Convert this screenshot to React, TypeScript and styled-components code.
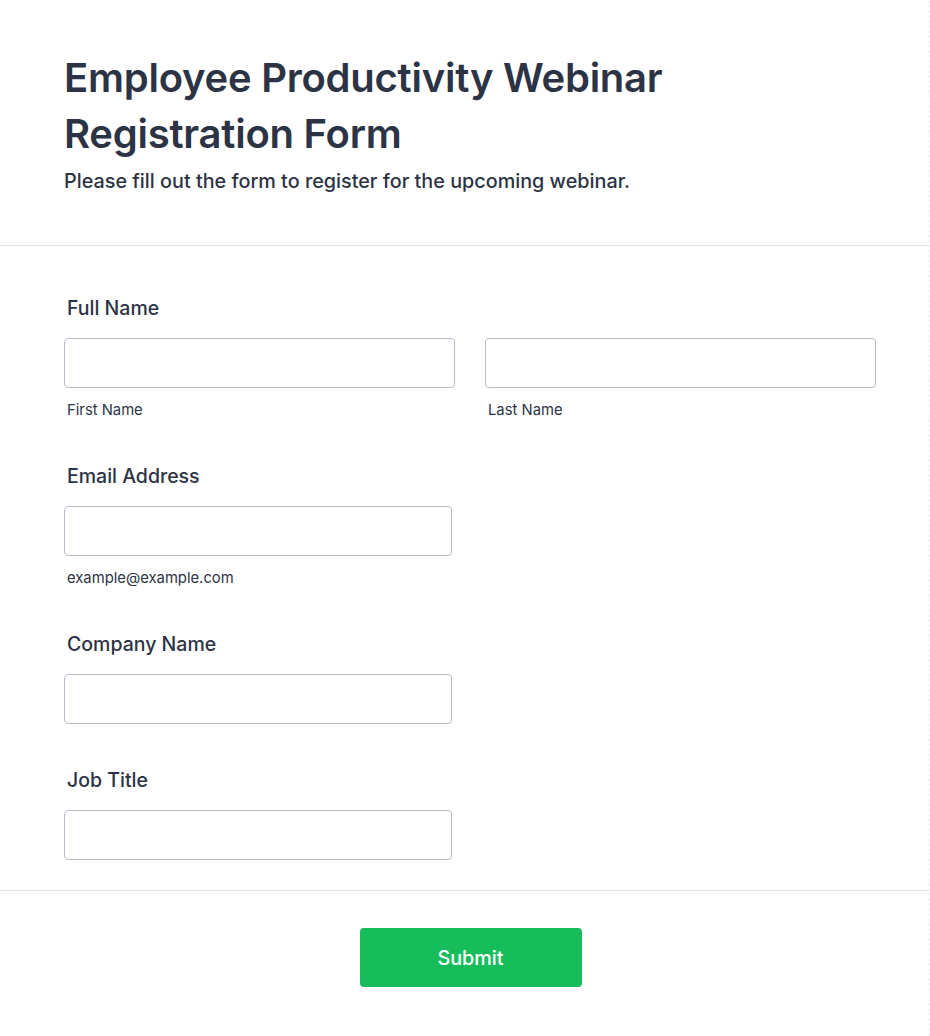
import styled, { createGlobalStyle } from 'styled-components';

const GlobalStyle = createGlobalStyle`
  body {
    margin: 0;
    background: #fff;
    font-family: Inter, "Noto Sans", sans-serif;
    color: #2c3345;
  }
`;

const fields = [
  { label: 'Email Address', hint: 'example@example.com' },
  { label: 'Company Name' },
  { label: 'Job Title' },
];

const App = () => {
  return (
    <>
      <GlobalStyle />
      <Card>
        <Header>
          <Title>
            Employee Productivity Webinar
            <br />
            Registration Form
          </Title>
          <Subtitle>Please fill out the form to register for the upcoming webinar.</Subtitle>
        </Header>
        <Body>
          <Field>
            <Label>Full Name</Label>
            <NameRow>
              <div>
                <Input />
                <Hint>First Name</Hint>
              </div>
              <div>
                <Input />
                <Hint>Last Name</Hint>
              </div>
            </NameRow>
          </Field>
          {fields.map((f) => (
            <Field key={f.label}>
              <Label>{f.label}</Label>
              <Input $half />
              {f.hint && <Hint>{f.hint}</Hint>}
            </Field>
          ))}
        </Body>
        <Footer>
          <SubmitButton type="button">Submit</SubmitButton>
        </Footer>
      </Card>
    </>
  );
};

export default App;

const Card = styled.div`
  width: 930px;
  min-height: 1036px;
  box-sizing: border-box;
  border-right: 1px dashed #ececf2;
  background: #fff;
`;

const Header = styled.div`
  padding: 50px 55px 50px 64px;
  border-bottom: 1px solid #e3e5ec;
`;

const Title = styled.h1`
  margin: 0;
  font-size: 40px;
  line-height: 56px;
  font-weight: 600;
  color: #2c3345;
  letter-spacing: -0.25px;
`;

const Subtitle = styled.p`
  margin: 6px 0 0;
  font-size: 19.8px;
  line-height: 27px;
  font-weight: 500;
  color: #2c3345;
`;

const Body = styled.div`
  padding: 28px 55px 9px 64px;
  border-bottom: 1px solid #e3e5ec;
`;

const Field = styled.div`
  padding: 21px 0;

  &:last-child {
    padding-top: 22px;
  }
`;

const Label = styled.div`
  padding-left: 3px;
  margin-bottom: 16px;
  font-size: 19.5px;
  line-height: 27px;
  font-weight: 500;
  color: #2c3345;
`;

const NameRow = styled.div`
  display: grid;
  grid-template-columns: 391px 391px;
  column-gap: 30px;
`;

const Input = styled.input<{ $half?: boolean }>`
  display: block;
  box-sizing: border-box;
  width: ${(p) => (p.$half ? '388px' : '100%')};
  height: 50px;
  border: 1px solid #b8bdc9;
  border-radius: 4px;
  background: #fff;
  padding: 0 12px;
  font-family: inherit;
  font-size: 16px;
  outline: none;
`;

const Hint = styled.div`
  margin-top: 12px;
  padding-left: 3px;
  font-size: 14.8px;
  line-height: 21px;
  color: #2c3345;
`;

const Footer = styled.div`
  display: flex;
  justify-content: center;
  padding: 37px 0 40px;
`;

const SubmitButton = styled.button`
  width: 222px;
  height: 59px;
  margin-left: 12px;
  border: none;
  border-radius: 4px;
  background: #18bd5b;
  color: #fff;
  font-family: inherit;
  font-size: 19.8px;
  font-weight: 500;
  cursor: pointer;
`;
